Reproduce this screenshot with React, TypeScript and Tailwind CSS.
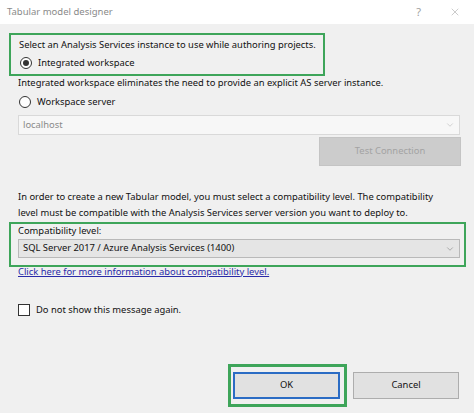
import { ChevronDown, X } from 'lucide-react';

const Radio = ({ checked }: { checked?: boolean }) => (
  <span className="w-[12px] h-[12px] rounded-full border border-[#333] bg-white flex items-center justify-center shrink-0">
    {checked && <span className="w-[6px] h-[6px] rounded-full bg-[#333]" />}
  </span>
);

const App = () => {
  return (
    <div className="w-[474px] h-[413px] bg-[#f0f0f0] text-[9.4px] text-[#111] overflow-hidden whitespace-nowrap" style={{ fontFamily: '"Noto Sans", "Open Sans", sans-serif' }}>
      <div className="h-[24px] bg-white flex items-center pl-[7px] pr-[13px] text-[9.5px] text-[#8a8a8a]">
        <span>Tabular model designer</span>
        <span className="ml-auto mr-[28px] text-[11px] text-[#a0a0a0]">?</span>
        <X size={12} strokeWidth={1.1} className="text-[#a0a0a0]" />
      </div>

      <div className="px-[9px]">
        <div className="mt-[9px] w-[316px] h-[43px] border-2 border-[#3ea55a] pl-[8px] flex flex-col">
          <div className="h-[20px] flex items-center">Select an Analysis Services instance to use while authoring projects.</div>
          <div className="h-[16px] flex items-center gap-[6px] pl-[1px]">
            <Radio checked />
            <span>Integrated workspace</span>
          </div>
        </div>

        <div className="pl-[9px]">
          <div className="h-[14px] flex items-center">Integrated workspace eliminates the need to provide an explicit AS server instance.</div>
          <div className="h-[16px] mt-[4px] flex items-center gap-[6px] pl-[1px]">
            <Radio />
            <span>Workspace server</span>
          </div>
          <div className="mt-[5px] w-[442px] h-[20px] border border-[#d9d9d9] bg-[#f7f7f7] flex items-center px-[4px] text-[#8a8a8a]">
            <span>localhost</span>
            <ChevronDown size={10} strokeWidth={1.3} className="ml-auto text-[#b0b0b0]" />
          </div>
          <div className="flex justify-end mt-[2px] w-[443px]">
            <div className="w-[142px] h-[29px] bg-[#cccccc] border border-[#c4c4c4] flex items-center justify-center text-[#a3a3a3]">Test Connection</div>
          </div>

          <div className="mt-[23px] leading-[16px]">
            In order to create a new Tabular model, you must select a compatibility level. The compatibility
            <br />
            level must be compatible with the Analysis Services server version you want to deploy to.
          </div>
        </div>

        <div className="mt-[1px] w-[457px] h-[45px] border-2 border-[#3ea55a] pl-[7px] flex flex-col">
          <div className="h-[14px] flex items-center">Compatibility level:</div>
          <div className="mt-[1px] w-[442px] h-[19px] border border-[#b9b9b9] bg-[#e5e5e5] flex items-center px-[4px]">
            <span>SQL Server 2017 / Azure Analysis Services (1400)</span>
            <ChevronDown size={10} strokeWidth={1.3} className="ml-auto text-[#777]" />
          </div>
        </div>

        <div className="pl-[9px]">
          <div className="h-[10px] flex items-center text-[#2a2aa8] underline">Click here for more information about compatibility level.</div>

          <div className="mt-[27px] h-[12px] flex items-center gap-[6px]">
            <span className="w-[12px] h-[12px] border border-[#333] bg-white shrink-0" />
            <span>Do not show this message again.</span>
          </div>
        </div>

        <div className="mt-[48px] flex items-center">
          <div className="ml-[219px] w-[119px] h-[43px] border-[3px] border-[#3ea55a] flex items-center pl-[2px]">
            <div className="w-[107px] h-[27px] border-2 border-[#2b6cc4] bg-[#e1e1e1] flex items-center justify-center">OK</div>
          </div>
          <div className="ml-[6px] w-[106px] h-[27px] border border-[#adadad] bg-[#e1e1e1] flex items-center justify-center">Cancel</div>
        </div>
      </div>
    </div>
  );
};

export default App;
